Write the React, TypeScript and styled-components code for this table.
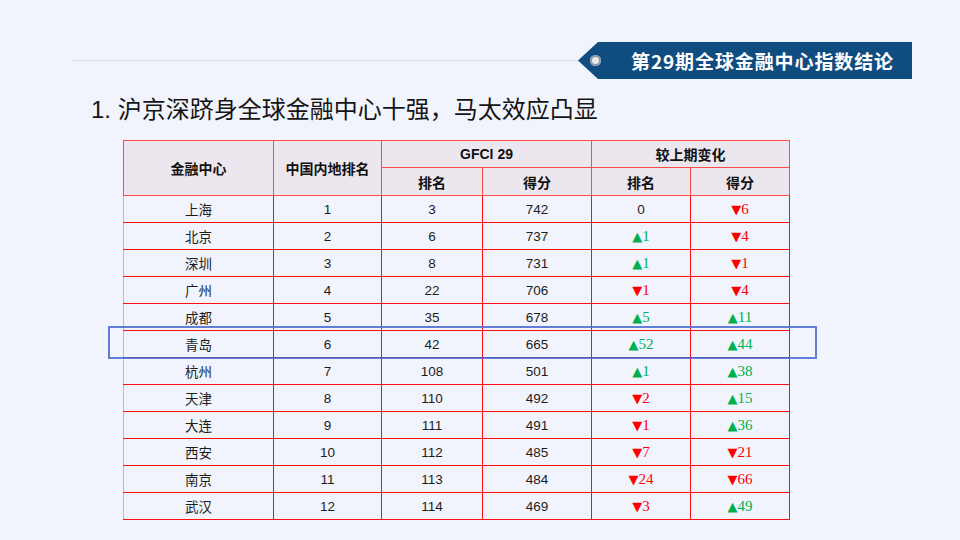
import React from "react";
import styled, { createGlobalStyle } from "styled-components";

const Global = createGlobalStyle`
  html, body { margin: 0; padding: 0; background: #f2f4fd; }
  body { font-family: "Liberation Sans", "Noto Sans CJK SC", sans-serif; }
`;

const Page = styled.div`
  width: 960px;
  height: 540px;
  background: #f2f4fd;
  overflow: hidden;
  display: flex;
  flex-direction: column;
`;

const TopBar = styled.div`
  display: flex;
  align-items: center;
  margin-top: 42px;
  height: 37px;
  padding-left: 72px;
`;

const Rule = styled.div`
  width: 506px;
  height: 1px;
  background: #d6dbe8;
`;

const Banner = styled.div`
  width: 334px;
  height: 37px;
  background: #0f4c7f;
  clip-path: polygon(20px 0, 100% 0, 100% 100%, 20px 100%, 0 50%);
  display: flex;
  align-items: center;
  position: relative;
`;

const Dot = styled.span`
  position: absolute;
  left: 12px;
  top: 13px;
  width: 11px;
  height: 11px;
  border-radius: 50%;
  background: #e8eaee;
  box-shadow: inset 0 0 0 2px #8a98a8;
`;

const BannerText = styled.span`
  margin-left: 53px;
  color: #ffffff;
  font-family: "Noto Sans CJK SC", sans-serif;
  font-weight: 700;
  font-size: 19px;
  letter-spacing: 0.9px;
`;

const Title = styled.h1`
  margin: 16px 0 0 91px;
  font-family: "Liberation Sans", "Noto Sans CJK SC", sans-serif;
  font-weight: 400;
  font-size: 24px;
  line-height: 30px;
  color: #151515;
`;

const TableWrap = styled.div`
  position: relative;
  margin: 15px 0 0 123px;
  width: 667px;
`;

const Table = styled.table`
  border-collapse: collapse;
  table-layout: fixed;
  width: 667px;
  font-size: 13px;
  color: #1c1c1c;
`;

const HeadCell = styled.th<{ $tall?: boolean }>`
  background: #ece7ef;
  font-family: "Liberation Sans", "Noto Sans CJK SC", sans-serif;
  font-weight: 700;
  font-size: 14px;
  height: ${(p) => (p.$tall ? 27 : 26)}px;
  padding: 0;
  text-align: center;
  border: 1px solid #ff4a4a;
  color: #111;
`;

const Cell = styled.td<{ $light?: boolean }>`
  height: 26px;
  padding: 0;
  text-align: center;
  border: 1px solid #ff1010;
  border-left-color: ${(p) => (p.$light ? "#f6a5ad" : "#ff1010")};
  font-family: "Liberation Sans", "Noto Sans CJK SC", sans-serif;
  font-size: 13.5px;
  color: #1c1c1c;
`;

const Change = styled.span<{ $up?: boolean }>`
  font-family: "Liberation Serif", "DejaVu Serif", serif;
  font-size: 15px;
  color: ${(p) => (p.$up ? "#00b050" : "#ff0000")};
`;

const Arrow = styled.span`
  font-family: "DejaVu Sans", sans-serif;
  font-size: 13px;
`;

const Highlight = styled.div`
  position: absolute;
  left: -15px;
  top: 186px;
  width: 705px;
  height: 29px;
  border: 2px solid rgba(70, 105, 210, 0.85);
  pointer-events: none;
`;

type Row = [string, number, number, number, string, string];

const rows: Row[] = [
  ["上海", 1, 3, 742, "0", "-6"],
  ["北京", 2, 6, 737, "+1", "-4"],
  ["深圳", 3, 8, 731, "+1", "-1"],
  ["广州", 4, 22, 706, "-1", "-4"],
  ["成都", 5, 35, 678, "+5", "+11"],
  ["青岛", 6, 42, 665, "+52", "+44"],
  ["杭州", 7, 108, 501, "+1", "+38"],
  ["天津", 8, 110, 492, "-2", "+15"],
  ["大连", 9, 111, 491, "-1", "+36"],
  ["西安", 10, 112, 485, "-7", "-21"],
  ["南京", 11, 113, 484, "-24", "-66"],
  ["武汉", 12, 114, 469, "-3", "+49"],
];

function ChangeValue({ v }: { v: string }) {
  if (v === "0") return <span>0</span>;
  const up = v.startsWith("+");
  return (
    <Change $up={up}>
      <Arrow>{up ? "▲" : "▼"}</Arrow>
      {v.slice(1)}
    </Change>
  );
}

export default function App() {
  return (
    <Page>
      <Global />
      <TopBar>
        <Rule />
        <Banner>
          <Dot />
          <BannerText>第29期全球金融中心指数结论</BannerText>
        </Banner>
      </TopBar>
      <Title>1. 沪京深跻身全球金融中心十强，马太效应凸显</Title>
      <TableWrap>
        <Table>
          <colgroup>
            <col style={{ width: 150 }} />
            <col style={{ width: 108 }} />
            <col style={{ width: 101 }} />
            <col style={{ width: 109 }} />
            <col style={{ width: 99 }} />
            <col style={{ width: 99 }} />
          </colgroup>
          <thead>
            <tr>
              <HeadCell rowSpan={2}>金融中心</HeadCell>
              <HeadCell rowSpan={2}>中国内地排名</HeadCell>
              <HeadCell colSpan={2}>GFCI 29</HeadCell>
              <HeadCell colSpan={2}>较上期变化</HeadCell>
            </tr>
            <tr>
              <HeadCell $tall>排名</HeadCell>
              <HeadCell $tall>得分</HeadCell>
              <HeadCell $tall>排名</HeadCell>
              <HeadCell $tall>得分</HeadCell>
            </tr>
          </thead>
          <tbody>
            {rows.map((r) => (
              <tr key={r[0]}>
                <Cell $light>{r[0]}</Cell>
                <Cell>{r[1]}</Cell>
                <Cell>{r[2]}</Cell>
                <Cell>{r[3]}</Cell>
                <Cell>
                  <ChangeValue v={r[4]} />
                </Cell>
                <Cell $light>
                  <ChangeValue v={r[5]} />
                </Cell>
              </tr>
            ))}
          </tbody>
        </Table>
        <Highlight />
      </TableWrap>
    </Page>
  );
}
